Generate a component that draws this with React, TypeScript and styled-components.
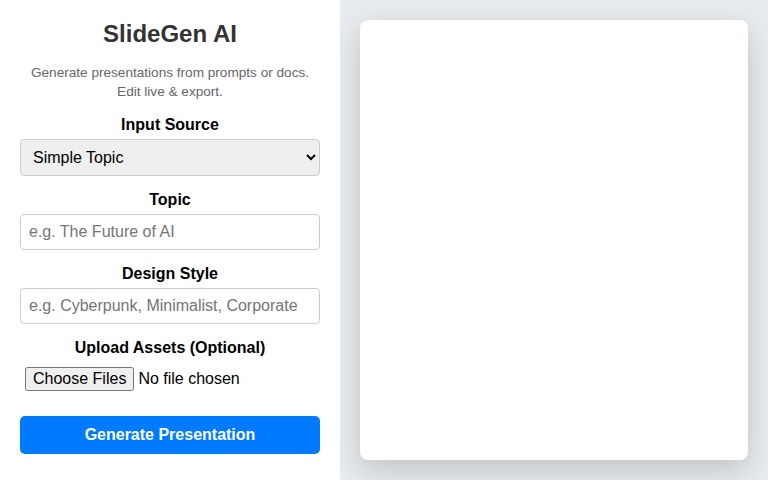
import { FC, useState } from 'react';
import styled, { createGlobalStyle } from 'styled-components';

const GlobalStyle = createGlobalStyle`
  * {
    box-sizing: border-box;
  }
  html, body, #root {
    height: 100%;
  }
  body {
    margin: 0;
    font-family: "Liberation Sans", Arial, sans-serif;
    background: #e9ecef;
    overflow: hidden;
  }
`;

const Layout = styled.div`
  display: flex;
  height: 100vh;
`;

const Sidebar = styled.aside`
  width: 340px;
  flex-shrink: 0;
  background: #fff;
  padding: 20px;
  display: flex;
  flex-direction: column;
  text-align: center;
  z-index: 1;
`;

const Title = styled.h1`
  margin: 0 0 15px;
  font-size: 24px;
  font-weight: bold;
  color: #333;
`;

const Subtitle = styled.p`
  margin: 0 0 14.5px;
  font-size: 13.6px;
  line-height: 19px;
  color: #666;
`;

const Group = styled.div`
  display: flex;
  flex-direction: column;
  margin-bottom: 15px;
`;

const Label = styled.label`
  font-size: 16px;
  font-weight: bold;
  color: #000;
  margin-bottom: 5px;
`;

const Select = styled.select`
  width: 100%;
  padding: 8px;
  font-size: 16px;
  font-family: inherit;
  border: 1px solid #ccc;
  border-radius: 4px;
  background: #efefef;
  color: #000;
`;

const TextInput = styled.input`
  width: 100%;
  padding: 8px;
  font-size: 16px;
  font-family: inherit;
  border: 1px solid #ccc;
  border-radius: 4px;
  color: #000;
  &::placeholder {
    color: #757575;
  }
`;

const FileInput = styled.input`
  padding: 5px;
  font-size: 16px;
  font-family: inherit;
  border: none;
  text-align: left;
`;

const GenerateButton = styled.button`
  margin-top: 5px;
  width: 100%;
  padding: 10px;
  font-size: 16px;
  font-weight: bold;
  font-family: inherit;
  color: #fff;
  background: #007bff;
  border: none;
  border-radius: 5px;
  cursor: pointer;
`;

const Preview = styled.main`
  flex: 1;
  padding: 20px;
  display: flex;
`;

const SlideCard = styled.div`
  flex: 1;
  background: #fff;
  border-radius: 8px;
  box-shadow: 0 10px 30px rgba(0, 0, 0, 0.18);
`;

const App: FC = () => {
    const [source, setSource] = useState('topic')
    const [topic, setTopic] = useState('')
    const [style, setStyle] = useState('')

    return (
        <>
            <GlobalStyle />
            <Layout>
                <Sidebar>
                    <Title>SlideGen AI</Title>
                    <Subtitle>
                        Generate presentations from prompts or docs.
                        <br />
                        Edit live &amp; export.
                    </Subtitle>
                    <Group>
                        <Label htmlFor="source">Input Source</Label>
                        <Select id="source" value={source} onChange={e => setSource(e.target.value)}>
                            <option value="topic">Simple Topic</option>
                            <option value="doc">Document</option>
                        </Select>
                    </Group>
                    <Group>
                        <Label htmlFor="topic">Topic</Label>
                        <TextInput
                            id="topic"
                            placeholder="e.g. The Future of AI"
                            value={topic}
                            onChange={e => setTopic(e.target.value)}
                        />
                    </Group>
                    <Group>
                        <Label htmlFor="style">Design Style</Label>
                        <TextInput
                            id="style"
                            placeholder="e.g. Cyberpunk, Minimalist, Corporate"
                            value={style}
                            onChange={e => setStyle(e.target.value)}
                        />
                    </Group>
                    <Group>
                        <Label htmlFor="assets">Upload Assets (Optional)</Label>
                        <FileInput id="assets" type="file" multiple />
                    </Group>
                    <GenerateButton>Generate Presentation</GenerateButton>
                </Sidebar>
                <Preview>
                    <SlideCard />
                </Preview>
            </Layout>
        </>
    );
};

export default App;
